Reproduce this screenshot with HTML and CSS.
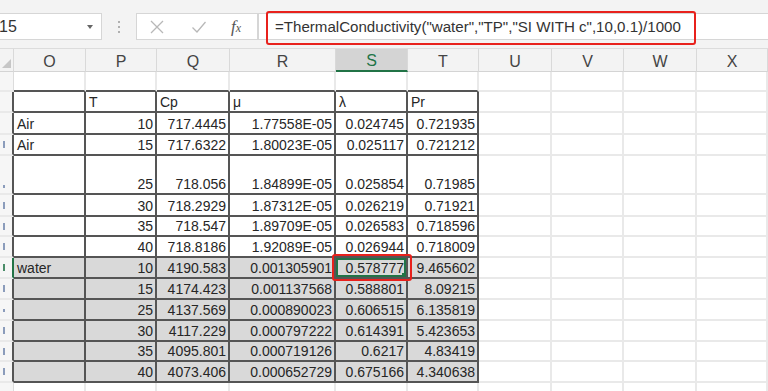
FILE: index.html
```html
<!DOCTYPE html>
<html lang="en">
  <head>
    <meta charset="UTF-8" />
    <meta name="viewport" content="width=device-width, initial-scale=1.0" />
    <title>Thermal Conductivity</title>
    <link rel="stylesheet" href="styles.css">
  </head>
  <body>
    <div class="topbar">
      <div class="namebox">
        <span>15</span>
        <span class="caret"></span>
      </div>
      <div class="grip"><i></i><i></i><i></i></div>
      <div class="fbtns">
        <svg width="16" height="16" viewBox="0 0 16 16"><path d="M2 2 L14 14 M14 2 L2 14" stroke="#b8b8b8" stroke-width="1.3" fill="none"/></svg>
        <svg width="16" height="16" viewBox="0 0 16 16"><path d="M1.5 8.5 L6 13 L14.5 3" stroke="#b8b8b8" stroke-width="1.3" fill="none"/></svg>
        <span class="fx">f<small>x</small></span>
      </div>
      <div class="formula">=ThermalConductivity("water","TP","SI WITH c",10,0.1)/1000</div>
    </div>

    <table class="sheet">
      <tr class="cols">
        <th class="corner"><span></span></th>
        <th class="w-o">O</th>
        <th class="w-p">P</th>
        <th class="w-q">Q</th>
        <th class="w-r">R</th>
        <th class="w-s on">S</th>
        <th class="w-t">T</th>
        <th class="w-u">U</th>
        <th class="w-v">V</th>
        <th class="w-w">W</th>
        <th class="w-x">X</th>
      </tr>
      <tr class="h20">
        <td class="rn"></td>
        <td class="top"></td><td class="top"></td><td class="top"></td><td class="top"></td><td class="top"></td><td class="top"></td>
        <td></td><td></td><td></td><td></td>
      </tr>
      <tr class="h21">
        <td class="rn in"></td>
        <td class="t"></td>
        <td class="t txt">T</td>
        <td class="t txt">Cp</td>
        <td class="t txt">μ</td>
        <td class="t txt">λ</td>
        <td class="t txt">Pr</td>
        <td></td><td></td><td></td><td></td>
      </tr>
      <tr class="h22">
        <td class="rn in"></td>
        <td class="t txt">Air</td>
        <td class="t">10</td>
        <td class="t">717.4445</td>
        <td class="t">1.77558E-05</td>
        <td class="t">0.024745</td>
        <td class="t">0.721935</td>
        <td></td><td></td><td></td><td></td>
      </tr>
      <tr class="h21">
        <td class="rn in"><i class="mk"></i></td>
        <td class="t txt">Air</td>
        <td class="t">15</td>
        <td class="t">717.6322</td>
        <td class="t">1.80023E-05</td>
        <td class="t">0.025117</td>
        <td class="t">0.721212</td>
        <td></td><td></td><td></td><td></td>
      </tr>
      <tr class="h39">
        <td class="rn in low"><i class="mk dot"></i></td>
        <td class="t"></td>
        <td class="t">25</td>
        <td class="t">718.056</td>
        <td class="t">1.84899E-05</td>
        <td class="t">0.025854</td>
        <td class="t">0.71985</td>
        <td></td><td></td><td></td><td></td>
      </tr>
      <tr class="h22">
        <td class="rn in"><i class="mk"></i></td>
        <td class="t"></td>
        <td class="t">30</td>
        <td class="t">718.2929</td>
        <td class="t">1.87312E-05</td>
        <td class="t">0.026219</td>
        <td class="t">0.71921</td>
        <td></td><td></td><td></td><td></td>
      </tr>
      <tr class="h20">
        <td class="rn in"><i class="mk"></i></td>
        <td class="t"></td>
        <td class="t">35</td>
        <td class="t">718.547</td>
        <td class="t">1.89709E-05</td>
        <td class="t">0.026583</td>
        <td class="t">0.718596</td>
        <td></td><td></td><td></td><td></td>
      </tr>
      <tr class="h21">
        <td class="rn in"><i class="mk"></i></td>
        <td class="t"></td>
        <td class="t">40</td>
        <td class="t">718.8186</td>
        <td class="t">1.92089E-05</td>
        <td class="t">0.026944</td>
        <td class="t">0.718009</td>
        <td></td><td></td><td></td><td></td>
      </tr>
      <tr class="h21">
        <td class="rn in cur"><i class="mk"></i></td>
        <td class="t f txt">water</td>
        <td class="t f">10</td>
        <td class="t f">4190.583</td>
        <td class="t f">0.001305901</td>
        <td class="t f sel">0.578777</td>
        <td class="t f">9.465602</td>
        <td></td><td></td><td></td><td></td>
      </tr>
      <tr class="h21">
        <td class="rn in"><i class="mk"></i></td>
        <td class="t f"></td>
        <td class="t f">15</td>
        <td class="t f">4174.423</td>
        <td class="t f">0.001137568</td>
        <td class="t f">0.588801</td>
        <td class="t f">8.09215</td>
        <td></td><td></td><td></td><td></td>
      </tr>
      <tr class="h21">
        <td class="rn in"><i class="mk dot"></i></td>
        <td class="t f"></td>
        <td class="t f">25</td>
        <td class="t f">4137.569</td>
        <td class="t f">0.000890023</td>
        <td class="t f">0.606515</td>
        <td class="t f">6.135819</td>
        <td></td><td></td><td></td><td></td>
      </tr>
      <tr class="h21">
        <td class="rn in"><i class="mk"></i></td>
        <td class="t f"></td>
        <td class="t f">30</td>
        <td class="t f">4117.229</td>
        <td class="t f">0.000797222</td>
        <td class="t f">0.614391</td>
        <td class="t f">5.423653</td>
        <td></td><td></td><td></td><td></td>
      </tr>
      <tr class="h20">
        <td class="rn in"><i class="mk"></i></td>
        <td class="t f"></td>
        <td class="t f">35</td>
        <td class="t f">4095.801</td>
        <td class="t f">0.000719126</td>
        <td class="t f">0.6217</td>
        <td class="t f">4.83419</td>
        <td></td><td></td><td></td><td></td>
      </tr>
      <tr class="h21">
        <td class="rn in"><i class="mk"></i></td>
        <td class="t f"></td>
        <td class="t f">40</td>
        <td class="t f">4073.406</td>
        <td class="t f">0.000652729</td>
        <td class="t f">0.675166</td>
        <td class="t f">4.340638</td>
        <td></td><td></td><td></td><td></td>
      </tr>
      <tr class="h21">
        <td class="rn"></td>
        <td></td><td></td><td></td><td></td><td></td><td></td>
        <td></td><td></td><td></td><td></td>
      </tr>
    </table>

    <!-- red annotation boxes -->
    <div class="callout callout-formula"></div>
    <div class="callout callout-cell"></div>
  </body>
</html>
```

FILE: styles.css
```css
* {
  margin: 0;
  padding: 0;
  box-sizing: border-box;
}
body {
  font-family: "Liberation Sans", Arial, sans-serif;
  background-color: #fff;
  width: 768px;
  height: 391px;
  overflow: hidden;
  position: relative;
}

/* formula bar */
.topbar {
  height: 48px;
  background-color: #f3f3f3;
  display: flex;
  align-items: flex-start;
  padding-top: 13px;
}
.namebox {
  width: 102px;
  height: 27px;
  background-color: #fff;
  border: 1px solid #d6d6d6;
  border-left: none;
  display: flex;
  align-items: center;
  justify-content: space-between;
  padding-right: 8px;
  font-size: 16px;
  color: #333;
}
.namebox span:first-child {
  margin-left: -1px;
}
.caret {
  width: 0;
  height: 0;
  border-left: 3px solid transparent;
  border-right: 3px solid transparent;
  border-top: 4px solid #666;
}
.grip {
  width: 34px;
  height: 27px;
  display: flex;
  flex-direction: column;
  align-items: center;
  justify-content: center;
  gap: 3px;
}
.grip i {
  width: 2px;
  height: 2px;
  background-color: #b0b0b0;
}
.fbtns {
  width: 122px;
  height: 27px;
  background-color: #fff;
  border: 1px solid #d6d6d6;
  display: flex;
  align-items: center;
  padding-left: 12px;
  gap: 26px;
}
.fx {
  font-family: "Liberation Serif", serif;
  font-style: italic;
  font-size: 17px;
  color: #555;
  margin-left: -2px;
}
.fx small {
  font-size: 12px;
}
.formula {
  flex: 1;
  height: 27px;
  background-color: #fff;
  border: 1px solid #d6d6d6;
  border-right: none;
  padding-left: 16px;
  font-size: 15.1px;
  line-height: 26px;
  color: #333;
  white-space: nowrap;
}

/* grid */
.sheet {
  table-layout: fixed;
  border-collapse: separate;
  border-spacing: 0;
  width: 768px;
  font-size: 14px;
  color: #262626;
}
.sheet th {
  height: 24px;
  background-color: #f3f3f3;
  border-top: 1px solid #dcdcdc;
  border-right: 1px solid #d9d9d9;
  border-bottom: 1px solid #d4d4d4;
  padding-top: 3px;
  font-weight: normal;
  font-size: 16px;
  color: #444;
  text-align: center;
  vertical-align: middle;
}
.sheet th.on {
  background-color: #d4d4d4;
  border-bottom: 2px solid #217346;
  color: #217346;
}
.corner {
  width: 14px;
  position: relative;
}
.corner span {
  position: absolute;
  right: 2px;
  bottom: 3px;
  border-left: 9px solid transparent;
  border-bottom: 9px solid #c6c6c6;
}
.w-o { width: 72px; }
.w-p { width: 71px; }
.w-q { width: 73px; }
.w-r { width: 106px; }
.w-s { width: 72px; }
.w-t { width: 71px; }
.w-u { width: 73px; }
.w-v { width: 72px; }
.w-w { width: 73px; }
.w-x { width: 71px; }

.h20 { height: 20px; }
.h21 { height: 21px; }
.h22 { height: 22px; }
.h39 { height: 39px; }

.sheet td {
  border-right: 2px solid #e9e9e9;
  border-bottom: 2px solid #e9e9e9;
  text-align: right;
  vertical-align: bottom;
  padding: 0 2px 0 3px;
  line-height: 17px;
  white-space: nowrap;
  overflow: hidden;
}

/* row headers, cut off at the window edge */
.sheet td.rn {
  background-color: #f6f6f6;
  border-right: 1px solid #dcdcdc;
  padding: 0 0 0 3px;
  text-align: left;
  vertical-align: middle;
  line-height: 0;
}
.sheet td.rn.low {
  vertical-align: bottom;
  padding-bottom: 5px;
}
.mk {
  display: inline-block;
  width: 2px;
  height: 7px;
  background-color: #7186ad;
  opacity: 0.8;
}
.mk.dot {
  height: 3px;
}
.sheet td.rn.in {
  border-right: 2px solid #555;
}
.sheet td.rn.cur {
  border-right: 2px solid #217346;
}
.sheet td.rn.cur .mk {
  background-color: #217346;
}

.sheet td.top {
  border-bottom: 2px solid #555;
}
.sheet td.t {
  border-right: 2px solid #555;
  border-bottom: 2px solid #555;
}
.sheet td.txt {
  text-align: left;
}
.sheet td.f {
  background-color: #d9d9d9;
}
.sheet td.sel {
  position: relative;
  box-shadow: inset 0 0 0 2px #217346;
}
.sheet td.sel::after {
  content: "";
  position: absolute;
  right: 0;
  bottom: 0;
  width: 4px;
  height: 4px;
  background-color: #217346;
}

/* annotations */
.callout {
  position: absolute;
  border: 2px solid #e8211c;
  border-radius: 3px;
}
.callout-formula {
  left: 266px;
  top: 11px;
  width: 430px;
  height: 34px;
}
.callout-cell {
  left: 332px;
  top: 254px;
  width: 80px;
  height: 27px;
}
```
